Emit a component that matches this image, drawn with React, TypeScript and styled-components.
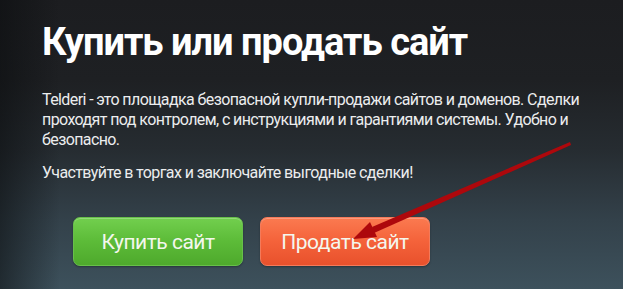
import React from "react";
import styled, { createGlobalStyle } from "styled-components";

const Global = createGlobalStyle`
  html, body { margin: 0; padding: 0; }
  body { width: 623px; height: 289px; overflow: hidden; }
`;

const FONT = `Roboto, "Liberation Sans", Arial, sans-serif`;

const Page = styled.div`
  position: relative;
  width: 623px;
  height: 289px;
  box-sizing: border-box;
  padding: 20px 30px 0 42px;
  background:
    linear-gradient(90deg, rgba(10, 12, 14, 0.55) 0px, rgba(10, 12, 14, 0) 60px),
    linear-gradient(180deg, #1c1d20 0px, #1e2023 80px, #262c31 150px, #33414a 220px, #3d515c 289px);
  font-family: ${FONT};
  color: #ffffff;
  display: flex;
  flex-direction: column;
`;

const Title = styled.h1`
  margin: 0;
  font-size: 38px;
  line-height: 44px;
  font-weight: 700;
  letter-spacing: -1px;
  color: #ffffff;
`;

const Para = styled.p<{ $top: number }>`
  margin: ${(p) => p.$top}px 0 0;
  max-width: 548px;
  font-size: 16px;
  line-height: 20px;
  letter-spacing: -0.6px;
  color: #ecedee;
`;

const Buttons = styled.div`
  display: flex;
  gap: 17px;
  margin: 34px 0 0 31px;
`;

const Button = styled.button<{ $tone: "green" | "orange" }>`
  width: 170px;
  height: 49px;
  border-radius: 7px;
  font-family: ${FONT};
  font-size: 21px;
  letter-spacing: -0.5px;
  color: #f4f7ee;
  cursor: pointer;
  border: 1px solid ${(p) => (p.$tone === "green" ? "#67c04a" : "#f47a5a")};
  background: ${(p) =>
    p.$tone === "green"
      ? "linear-gradient(180deg, #72cf4e 0%, #5cbb38 50%, #4ea92c 100%)"
      : "linear-gradient(180deg, #fb7a50 0%, #f4623a 50%, #e8512c 100%)"};
  box-shadow: inset 0 1px 0 rgba(255, 255, 255, 0.25), 0 1px 2px rgba(0, 0, 0, 0.3);
`;

const Arrow = styled.svg`
  position: absolute;
  left: 0;
  top: 0;
  pointer-events: none;
`;

export default function App() {
  return (
    <>
      <Global />
      <Page>
        <Title>Купить или продать сайт</Title>
        <Para $top={26}>
          Telderi - это площадка безопасной купли-продажи сайтов и доменов. Сделки
          проходят под контролем, с инструкциями и гарантиями системы. Удобно и
          безопасно.
        </Para>
        <Para $top={13}>Участвуйте в торгах и заключайте выгодные сделки!</Para>
        <Buttons>
          <Button $tone="green">Купить сайт</Button>
          <Button $tone="orange">Продать сайт</Button>
        </Buttons>
        <Arrow width="623" height="289" viewBox="0 0 623 289">
          <polygon points="570,142 571,145 374,233 372,227" fill="#ad080c" />
          <polygon points="353,239 377,237 370,222" fill="#ad080c" />
        </Arrow>
      </Page>
    </>
  );
}
